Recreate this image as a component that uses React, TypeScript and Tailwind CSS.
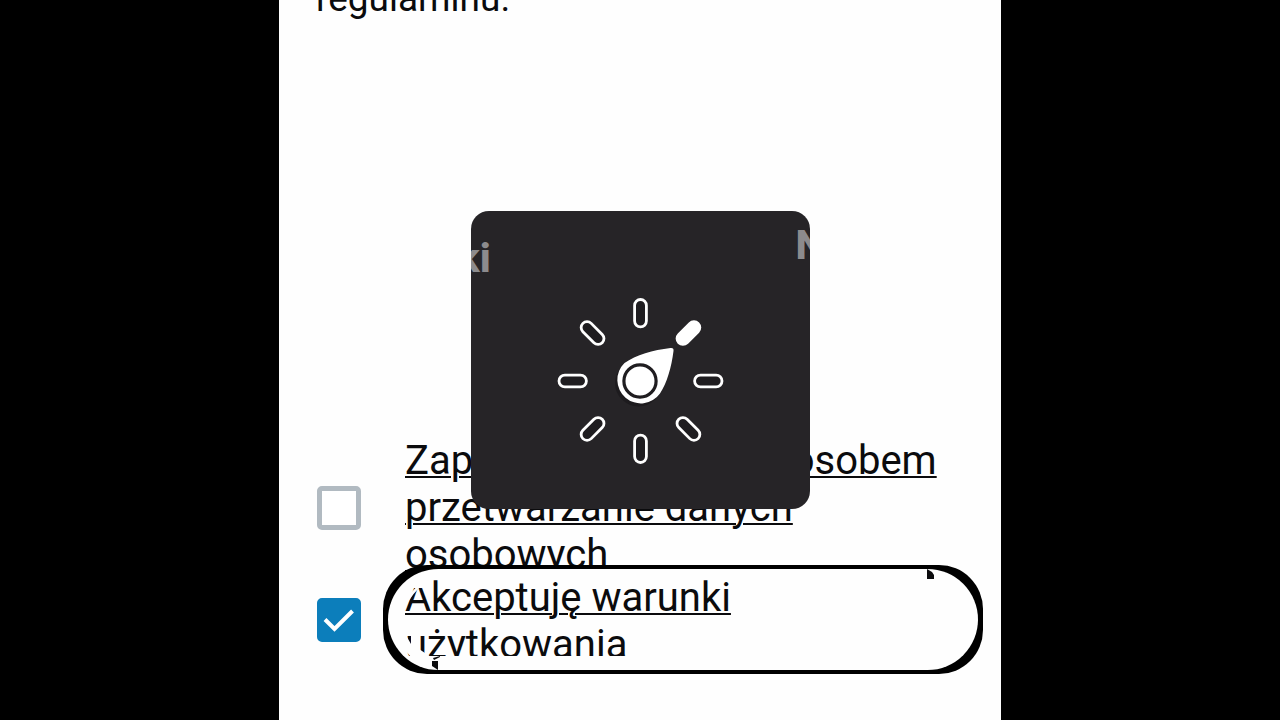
import { useState } from "react";

const TICKS = [0, 45, 90, 135, 180, 225, 270, 315];

function DialSpinner() {
  return (
    <svg viewBox="-90 -90 180 180" className="h-[180px] w-[180px]" aria-hidden="true">
      {TICKS.map((angle) => (
        <rect
          key={angle}
          x="-5.9"
          y="-81.5"
          width="11.8"
          height="27.4"
          rx="5.9"
          fill={angle === 45 ? "#ffffff" : "#1f1d20"}
          stroke="#ffffff"
          strokeWidth="2.8"
          transform={`translate(0.5 0) rotate(${angle})`}
        />
      ))}
      <circle cx="-1.5" cy="2" r="23.5" fill="#1d1b1e" />
      <path
        d="M30.5 -33 Q34 -33.5 33.5 -30 C31.5 -14 27 2 20 12.5 A23.5 23.5 0 1 1 -15.5 -18 C-4 -26 13 -31 30.5 -33 Z"
        fill="#ffffff"
      />
      <circle r="16.1" fill="#ffffff" stroke="#1f1d20" strokeWidth="3.2" />
    </svg>
  );
}

function LoadingPanel() {
  return (
    <div className="pointer-events-none absolute inset-0 z-20 flex items-center justify-center">
      <div
        role="status"
        aria-label="Loading"
        className="relative flex h-[298px] w-[339px] items-end justify-center overflow-hidden rounded-[18px] bg-[#262427] pb-[38px]"
      >
        <span className="absolute -left-[13px] top-6 text-[41px] font-extrabold leading-[47px] text-[#8c8b8d]">ki</span>
        <span className="absolute left-[325px] top-[11px] text-[41px] font-extrabold leading-[47px] text-[#8c8b8d]">N</span>
        <DialSpinner />
      </div>
    </div>
  );
}

interface ConsentBoxProps {
  id: string;
  checked: boolean;
  onChange: (checked: boolean) => void;
}

function ConsentBox({ id, checked, onChange }: ConsentBoxProps) {
  return (
    <div className="relative h-11 w-11 shrink-0">
      <input
        id={id}
        type="checkbox"
        checked={checked}
        onChange={(e) => onChange(e.target.checked)}
        className="block h-11 w-11 appearance-none rounded-[5px] border-[5px] border-[#b1bac1] bg-white checked:border-[#0c7ebb] checked:bg-[#0c7ebb]"
      />
      {checked && (
        <svg viewBox="0 0 44 44" className="pointer-events-none absolute inset-0" aria-hidden="true">
          <path d="M8 21.5 L17.5 31 L35.5 13" fill="none" stroke="#ffffff" strokeWidth="4" />
        </svg>
      )}
    </div>
  );
}

export default function App() {
  const [privacy, setPrivacy] = useState(false);
  const [terms, setTerms] = useState(true);

  return (
    <div className="flex h-screen justify-center overflow-hidden bg-black font-[Roboto,sans-serif]">
      <main className="relative w-full max-w-[722px] overflow-hidden bg-[#fefefe] text-[40px] leading-[47px] text-[#0b0b0d]">
        <p className="-mt-[25px] px-[37px] text-[37px]">regulaminu.</p>

        <div className="mt-[415px] flex items-center gap-11 pl-[38px] pr-[18px]">
          <ConsentBox id="privacy" checked={privacy} onChange={setPrivacy} />
          <label htmlFor="privacy" className="underline decoration-2 underline-offset-2">
            Zapoznałem się ze sposobem
            <br />
            przetwarzanie danych
            <br />
            osobowych
          </label>
        </div>

        {/* Focused row, its outline runs over the end of the row above */}
        <div className="relative z-10 -mt-[13px] flex items-center gap-[22px] pl-[38px] pr-[18px]">
          <ConsentBox id="terms" checked={terms} onChange={setTerms} />
          <div className="relative grow rounded-[44px] bg-black px-[5px] py-1">
            <div className="rounded-full bg-[#fefefe] pb-3.5 pl-[17px] pt-[5px]">
              <label htmlFor="terms" className="block h-[82px] overflow-hidden underline decoration-2 underline-offset-2">
                Akceptuję warunki
                <br />
                użytkowania
              </label>
            </div>
            <svg viewBox="0 0 80 109" className="pointer-events-none absolute left-0 top-0 h-[109px] w-20" aria-hidden="true">
              <path d="M24 36 Q29 28 36 21" fill="none" stroke="#fefefe" strokeWidth="2.5" />
              <path d="M30 16 H42 V23 H30 Z" fill="#fefefe" />
              <path d="M21 68 L24 72 L28 79 L28 68 L36 68 L36 84 L48 92 H28 L21 84 Z" fill="#fefefe" />
              <path d="M49 96 H55 V105 L49 101 Z M50 93 L57 91 V92 L51 95 Z" fill="#0b0b0d" />
            </svg>
            <svg viewBox="0 0 8 10" className="pointer-events-none absolute right-12 top-1 h-2.5 w-2" aria-hidden="true">
              <path d="M0 0 L5 3 L7 6 V10 H0 Z" fill="#0b0b0d" />
            </svg>
          </div>
        </div>

        <LoadingPanel />
      </main>
    </div>
  );
}
